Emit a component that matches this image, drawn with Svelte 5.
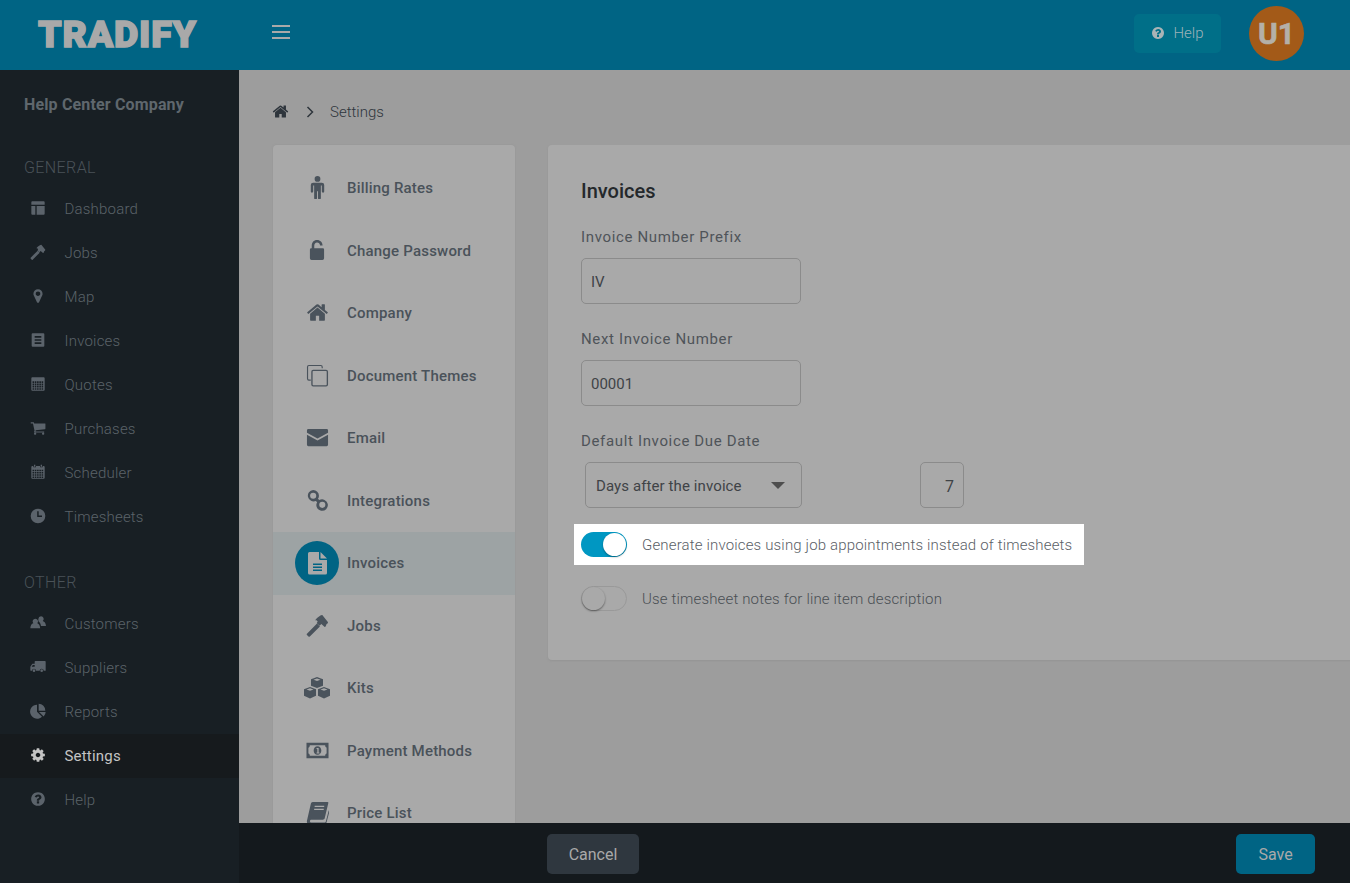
<script>
  const grid = (x0, y0, cols, rows, step, size) => {
    let d = '';
    for (let r = 0; r < rows; r++) for (let c = 0; c < cols; c++) {
      const x = x0 + c * step, y = y0 + r * step;
      d += `M${x} ${y}h${size}v${size}h-${size}z`;
    }
    return d;
  };
  const FA = '0 0 1792 1792';
  const I = {
    home: [FA, 'M1472 992v480q0 26-19 45t-45 19h-384v-384h-256v384h-384q-26 0-45-19t-19-45v-480q0-1 .5-3t.5-3l575-474 575 474q1 2 1 6zm223-69l-62 74q-8 9-21 11h-3q-13 0-21-7l-692-577-692 577q-12 8-24 7-13-2-21-11l-62-74q-8-10-7-23.500t11-21.500l719-599q32-26 76-26t76 26l244 204v-195q0-14 9-23t23-9h192q14 0 23 9t9 23v408l219 182q10 8 11 21.500t-7 23.500z'],
    help: [FA, 'M1024 1376v-192q0-14-9-23t-23-9h-192q-14 0-23 9t-9 23v192q0 14 9 23t23 9h192q14 0 23-9t9-23zm256-672q0-88-55.500-163t-138.500-116-170-41q-243 0-371 213-15 24 8 42l132 100q7 6 19 6 16 0 25-12 53-68 86-92 34-24 86-24 48 0 85.500 26t37.500 59q0 38-20 61t-68 45q-63 28-115.500 86.500t-52.500 125.500v36q0 14 9 23t23 9h192q14 0 23-9t9-23q0-19 21.500-49.500t54.500-49.500q32-18 49-28.500t46-35 44.500-48 28-60.500 12.500-81zm384 192q0 209-103 385.500t-279.500 279.500-385.500 103-385.500-103-279.500-279.500-103-385.500 103-385.500 279.500-279.500 385.500-103 385.500 103 279.500 279.500 103 385.500z'],
    marker: [FA, 'M1152 640q0-106-75-181t-181-75-181 75-75 181 75 181 181 75 181-75 75-181zm256 0q0 109-33 179l-364 774q-16 33-47.500 52t-67.500 19-67.500-19-46.500-52l-365-774q-33-70-33-179 0-212 150-362t362-150 362 150 150 362z'],
    cog: [FA, 'M1152 896q0-106-75-181t-181-75-181 75-75 181 75 181 181 75 181-75 75-181zm512-109v222q0 12-8 23t-20 13l-185 28q-19 54-39 91 35 50 107 138 10 12 10 25t-9 23q-27 37-99 108t-94 71q-12 0-26-9l-138-108q-44 23-91 38-16 136-29 186-7 28-36 28h-222q-14 0-24.500-8.500t-11.500-21.500l-28-184q-49-16-90-37l-141 107q-10 9-25 9-14 0-25-11-126-114-165-168-7-10-7-23 0-12 8-23 15-21 51-66.500t54-70.500q-27-50-41-99l-183-27q-13-2-21-12.500t-8-23.500v-222q0-12 8-23t19-13l186-28q14-46 39-92-40-57-107-138-10-12-10-24 0-10 9-23 26-36 98.500-107.500t94.500-71.500q13 0 26 10l138 107q44-23 91-38 16-136 29-186 7-28 36-28h222q14 0 24.500 8.500t11.500 21.500l28 184q49 16 90 37l142-107q9-9 24-9 13 0 25 10 129 119 165 170 7 8 7 22 0 12-8 23-15 21-51 66.500t-54 70.500q26 50 41 98l183 28q13 2 21 12.500t8 23.500z'],
    cart: [FA, 'M704 1536q0 52-38 90t-90 38-90-38-38-90 38-90 90-38 90 38 38 90zm896 0q0 52-38 90t-90 38-90-38-38-90 38-90 90-38 90 38 38 90zm128-1088v512q0 24-16.500 42.500t-40.500 21.500l-1044 122q13 60 13 70 0 16-24 64h920q26 0 45 19t19 45-19 45-45 19h-1024q-26 0-45-19t-19-45q0-11 8-31.500t16-36 21.500-40 15.500-29.500l-177-823h-204q-26 0-45-19t-19-45 19-45 45-19h256q16 0 28.500 6.500t19.500 15.500 13 24.500 8 26 5.500 29.500 4.500 26h1201q26 0 45 19t19 45z'],
    table: ['0 0 24 24', 'M2 3.500A1.500 1.500 0 0 1 3.500 2h17A1.500 1.500 0 0 1 22 3.500V7H2zM2 9h6v13H3.500A1.500 1.500 0 0 1 2 20.500zM10 9h12v11.500a1.500 1.500 0 0 1-1.500 1.500H10z'],
    hammer: ['0 0 24 24', 'M1 20.500 11.500 10l3 3L4 23.500a1 1 0 0 1-1.400 0L1 21.900a1 1 0 0 1 0-1.400zM9.500 6.500C12 3 15.500 1 17 1l6 7.500-.5 1.500-1 .5-1 2.500-1 .5-3.500-3-1.800 1.800-3-3 1-1.500c-.7-1.500-1.700-1.500-2.700-1.300z'],
    list: ['0 0 24 24', 'M4 2h16a1.500 1.500 0 0 1 1.500 1.500v17A1.500 1.500 0 0 1 20 22H4a1.500 1.500 0 0 1-1.500-1.500v-17A1.500 1.500 0 0 1 4 2zM7 6v2.500h10V6zM7 10.700v2.500h10v-2.500zM7 15.500V18h10v-2.500z'],
    calc: ['0 0 24 24', 'M3.500 2h17A1.500 1.500 0 0 1 22 3.500v17a1.500 1.500 0 0 1-1.500 1.500h-17A1.500 1.500 0 0 1 2 20.500v-17A1.500 1.500 0 0 1 3.500 2z' + grid(3.800, 8, 5, 4, 3.400, 2.400)],
    calendar: ['0 0 24 24', 'M6 1h2v3H6zM16 1h2v3h-2zM3.500 3H5v2h4V3h6v2h4V3h1.500A1.500 1.500 0 0 1 22 4.500v16a1.500 1.500 0 0 1-1.500 1.500h-17A1.500 1.500 0 0 1 2 20.500v-16A1.500 1.500 0 0 1 3.500 3z' + grid(3.800, 8.500, 5, 4, 3.400, 2.400)],
    clock: ['0 0 24 24', 'M12 1a11 11 0 1 1 0 22 11 11 0 0 1 0-22zM10.800 5v8.500H18v-2.200h-5V5z'],
    users: ['0 0 24 24', 'M16.500 2a4 4 0 0 1 2.700 7c2.700 1 4.300 3 4.800 7.500h-7.500c-.5-3.500-1.700-5.500-3.500-6.700-.3-.5-.5-1.500-.5-3.800a4.300 4.300 0 0 1 4-4zM8 5.500a4 4 0 0 1 3 6.700c2.700 1 4 3.300 4.300 7.800H.500C.7 15.500 2 13 5 12.200A4 4 0 0 1 8 5.500z'],
    truck: ['0 0 24 24', 'M8 3h14.500a1 1 0 0 1 1 1v13.500h-3a3 3 0 0 0-6 0H9a3 3 0 0 0-6 0H1a.5.5 0 0 1-.5-.5v-5.500L3.500 7H7V4a1 1 0 0 1 1-1zM2.500 11.500H7V9H4.200zM6 15.500a2 2 0 1 1 0 4 2 2 0 0 1 0-4zM17.500 15.500a2 2 0 1 1 0 4 2 2 0 0 1 0-4z'],
    pie: ['0 0 24 24', 'M10.500 2.500V13l7.500 7.500A10.500 10.500 0 1 1 10.500 2.500zM13 1a10.500 10.500 0 0 1 10 10.500H13zM13.500 13.500H23.500a10.500 10.500 0 0 1-3 6.800z'],
    male: ['0 0 24 24', 'M12 0a3 3 0 1 1 0 6 3 3 0 0 1 0-6zM7.500 7h9A2.500 2.500 0 0 1 19 9.500v6.500a1 1 0 0 1-2.500.3V10h-1v13a1 1 0 0 1-3 0v-7h-1v7a1 1 0 0 1-3 0V10h-1v6.300A1 1 0 0 1 5 16V9.500A2.500 2.500 0 0 1 7.500 7z'],
    unlock: ['0 0 24 24', 'M12 0c4 0 6.500 2.700 6.700 6.500h-3C15.500 4.300 14 3 12 3S8.700 4.500 8.700 7v3H19a1.500 1.500 0 0 1 1.500 1.500v10.500A2 2 0 0 1 18.500 24h-13a2 2 0 0 1-2-2V11.500A1.500 1.500 0 0 1 5 10h.700V7C5.700 2.700 8.200 0 12 0z'],
    copy: ['0 0 24 24', 'M3 1h12.500A2 2 0 0 1 17.500 3v1.500h-1.200V3a.8.8 0 0 0-.8-.8H3a.8.8 0 0 0-.8.8v12.500c0 .5.300.8.800.8h2v1.200H3a2 2 0 0 1-2-2V3a2 2 0 0 1 2-2zM7.500 6h13.500A2 2 0 0 1 23 8v13.500a2 2 0 0 1-2 2H7.500a2 2 0 0 1-2-2V8a2 2 0 0 1 2-2zM7.500 7.400a.6.6 0 0 0-.6.6v13.500c0 .3.300.6.600.6H21c.3 0 .6-.3.6-.6V8a.6.6 0 0 0-.6-.6z'],
    mail: ['0 0 24 24', 'M2.500 3h19A1.500 1.500 0 0 1 23 4.500V7l-11 6L1 7V4.500A1.500 1.500 0 0 1 2.500 3zM1 9.200l11 6 11-6V19.500a1.500 1.500 0 0 1-1.500 1.500h-19A1.500 1.500 0 0 1 1 19.500z'],
    link: ['0 0 24 24', 'M7.500 1a6 6 0 0 1 6 6 6 6 0 0 1-1 3.300l1.300 1.300a6 6 0 1 1-2.200 2.200l-1.300-1.300A6 6 0 1 1 7.500 1zM7.500 3.800a3.200 3.200 0 1 0 0 6.400 3.200 3.200 0 0 0 0-6.400zM17 13.300a3.200 3.200 0 1 0 0 6.400 3.200 3.200 0 0 0 0-6.400z'],
    file: ['0 0 24 24', 'M4.500 1H14v6.500a1.500 1.500 0 0 0 1.500 1.500H22v13a1.500 1.500 0 0 1-1.500 1.500h-16A1.500 1.500 0 0 1 3 22V2.500A1.500 1.500 0 0 1 4.500 1zM8 12.500V14h9v-1.500zM8 15.500V17h9v-1.500zM8 18.500V20h9v-1.500zM15.500 1l6.500 6.500h-6.500z'],
    cubes: ['0 0 28 24', 'M14 1l6 2.300v6.500L14 12 8 9.800V3.300zM10.500 3.700 14 5l3.500-1.300L14 2.600zM7 11l6 2.300v6.500l-6 2.800-6-2.800v-6.500zM3.500 13.400 7 14.800l3.500-1.400L7 12.200zM21 11l6 2.300v6.500l-6 2.800-6-2.800v-6.500zM17.500 13.400 21 14.800l3.500-1.400L21 12.200z'],
    money: ['0 0 24 24', 'M.5 4h23v16H.5zM4 6.500c0 1.500-.8 2.300-1.500 2.500v6c1 .3 1.500 1 1.500 2.500h16c0-1.500.7-2.200 1.500-2.500V9C20.700 8.700 20 8 20 6.500zM12 7.500c2.500 0 4 2 4 4.500s-1.500 4.500-4 4.500S8 14.500 8 12s1.500-4.500 4-4.500zM11 9.500v1h.8v3.500H11v1h3v-1h-.8V9.500z'],
    book: ['0 0 24 24', 'M7 1h15.500c.7 0 1 .5.800 1.200L19.500 18c-.3 1-1 1.500-2 1.500H5a1.700 1.700 0 0 0 0 3h14.500c.5 0 1-.3 1.200-1l3-11.500.8.700-3.300 12.500c-.2 1-1 1.800-2 1.800H4.500C2 25 .5 23 1 20.500L5 3c.2-1 1-2 2-2zM9 5v1.300h10V5zM8.500 8v1.300h10V8z'],
  };
  const general = [['table','Dashboard'],['hammer','Jobs'],['marker','Map'],['list','Invoices'],['calc','Quotes'],['cart','Purchases'],['calendar','Scheduler'],['clock','Timesheets']];
  const other = [['users','Customers'],['truck','Suppliers'],['pie','Reports'],['cog','Settings',true],['help','Help']];
  const settings = [['male','Billing Rates'],['unlock','Change Password'],['home','Company'],['copy','Document Themes'],['mail','Email'],['link','Integrations'],['file','Invoices',true],['hammer','Jobs'],['cubes','Kits'],['money','Payment Methods'],['book','Price List']];
</script>

{#snippet icon(name, cls)}
  <svg class={cls} viewBox={I[name][0]} aria-hidden="true"><path fill-rule="evenodd" d={I[name][1]} /></svg>
{/snippet}

{#snippet navlink(item)}
  <a class="nav-item" class:on={item[2]} href="#top">
    <span class="nav-ic">{@render icon(item[0], 'ic-' + item[0])}</span>
    <span>{item[1]}</span>
  </a>
{/snippet}

<div class="app">
  <header class="top">
    <div class="logo">TRADIFY</div>
    <button class="burger" aria-label="Menu"><i></i><i></i><i></i></button>
    <div class="top-right">
      <button class="help-btn">{@render icon('help', 'help-ic')}Help</button>
      <div class="avatar">U1</div>
    </div>
  </header>

  <aside class="side">
    <div class="company">Help Center Company</div>
    <div class="group first">GENERAL</div>
    <nav>{#each general as item}{@render navlink(item)}{/each}</nav>
    <div class="group second">OTHER</div>
    <nav>{#each other as item}{@render navlink(item)}{/each}</nav>
  </aside>

  <main class="main">
    <div class="content">
      <div class="crumbs">
        {@render icon('home', 'crumb-home')}
        <svg class="crumb-chev" viewBox="0 0 8 12" aria-hidden="true"><path d="M1.500 1l5 5-5 5" fill="none" stroke="currentColor" stroke-width="1.500" /></svg>
        <span>Settings</span>
      </div>
      <div class="panels">
        <nav class="subnav">
          {#each settings as item}
            <a class="sub-item" class:active={item[2]} href="#top">
              <span class="sub-ic">{@render icon(item[0], 'sic-' + item[0])}</span>
              <span>{item[1]}</span>
            </a>
          {/each}
        </nav>
        <section class="card">
          <h2>Invoices</h2>
          <label class="lbl" for="pre">Invoice Number Prefix</label>
          <input id="pre" class="inp" value="IV" readonly />
          <label class="lbl gap" for="nxt">Next Invoice Number</label>
          <input id="nxt" class="inp" value="00001" readonly />
          <div class="lbl gap">Default Invoice Due Date</div>
          <div class="due">
            <div class="sel"><span class="sel-text">Days after the invoice date</span><span class="caret"></span></div>
            <div class="num">7</div>
          </div>
          <div class="row hl">
            <span class="tog tog-on"><i></i></span>
            <span>Generate invoices using job appointments instead of timesheets</span>
          </div>
          <div class="row second-row">
            <span class="tog tog-off"><i></i></span>
            <span>Use timesheet notes for line item description</span>
          </div>
        </section>
      </div>
    </div>
    <footer class="foot">
      <button class="cancel">Cancel</button>
      <button class="save">Save</button>
    </footer>
  </main>
</div>

<style>
  :global(body) { margin: 0; background: #9d9d9d; font-family: Roboto, "Liberation Sans", sans-serif; }
  * { box-sizing: border-box; }
  .app { display: grid; grid-template-columns: 239px 1fr; grid-template-rows: 70px 813px; width: 1350px; height: 883px; overflow: hidden; }

  .top { grid-column: 1 / 3; background: #006484; display: flex; align-items: center; }
  .logo { width: 272px; padding-left: 38px; font: 900 37.500px/1 Roboto, sans-serif; letter-spacing: .8px; color: #a9a9a9; -webkit-text-stroke: 1.500px #a9a9a9; margin-top: -1px; }
  .burger { width: 18px; height: 14px; padding: 0; border: 0; background: none; display: flex; flex-direction: column; justify-content: space-between; margin-top: -6px; }
  .burger i { display: block; height: 2px; background: #a9a9a9; }
  .top-right { margin-left: auto; display: flex; align-items: center; padding-right: 46px; }
  .help-btn { width: 87px; height: 39px; margin-top: -4px; border: 0; border-radius: 5px; background: #006f88; color: #9db2b8; font: 300 15px Roboto, sans-serif; display: flex; align-items: center; justify-content: center; gap: 8px; }
  .help-btn :global(.help-ic) { width: 14px; height: 14px; fill: #a9b4b6; }
  .avatar { width: 55px; height: 55px; margin: -4px 0 0 28px; border-radius: 50%; background: #a35a18; color: #b4b0a8; font: 700 30px/55px Roboto, sans-serif; -webkit-text-stroke: .6px #b4b0a8; text-align: center; }

  .side { background: #181f24; color: #5b6369; }
  .company { padding: 25px 0 0 24px; font: 700 16px/20px Roboto, sans-serif; letter-spacing: .15px; color: #5f676d; }
  .group { padding-left: 24px; font: 300 16px/20px Roboto, sans-serif; letter-spacing: .4px; color: #4a5258; }
  .group.first { margin-top: 43px; margin-bottom: 9px; }
  .group.second { margin-top: 34px; margin-bottom: 9px; }
  .nav-item { display: flex; align-items: center; height: 44px; color: #5b6369; font: 300 15px/44px Roboto, sans-serif; letter-spacing: .2px; text-decoration: none; }
  .nav-item.on { background: #161a1d; color: #c4c4c4; font-weight: 400; }
  .nav-ic { width: 64.500px; display: flex; justify-content: center; padding-left: 11px; margin-top: -2px; flex: none; }
  .nav-ic :global(svg) { width: 16px; height: 16px; fill: #5b636b; flex: none; }
  .on .nav-ic :global(svg) { fill: #c4c4c4; }

  .main { position: relative; display: flex; flex-direction: column; min-width: 0; }
  .content { flex: 1; min-height: 0; overflow: hidden; padding-left: 34px; }
  .crumbs { height: 75px; padding-top: 32px; display: flex; align-items: flex-start; color: #2e353c; font: 300 15px/20px Roboto, sans-serif; }
  .crumbs :global(.crumb-home) { width: 17px; height: 17px; fill: #2e353c; margin: 1px 0 0 -1px; }
  .crumb-chev { width: 8px; height: 12px; margin: 4px 16px 0 17px; color: #2e353c; }
  .panels { display: flex; gap: 33px; align-items: flex-start; width: 1100px; }
  .subnav { width: 242px; flex: none; background: #a9a9a9; border-radius: 4px; padding-top: 12px; display: flex; flex-direction: column; box-shadow: 0 0 2px #949494; }
  .sub-item { height: 62.500px; display: flex; align-items: center; color: #4a525a; font: 500 15px Roboto, sans-serif; letter-spacing: .2px; text-decoration: none; flex: none; }
  .sub-item.active { background: #9da3a4; }
  .sub-ic { width: 74px; padding-left: 22px; padding-right: 8px; display: flex; justify-content: center; align-items: center; flex: none; margin-top: -1px; }
  .sub-ic :global(svg) { width: 23px; height: 23px; fill: #4a535c; flex: none; }
  .sub-ic :global(.sic-unlock) { width: 20px; height: 20px; }
  .sub-ic :global(.sic-cubes) { width: 28px; height: 24px; }
  .active .sub-ic { position: relative; }
  .active .sub-ic :global(svg) { width: 24px; height: 24px; fill: #a9a9a9; position: relative; }
  .active .sub-ic::before { content: ""; position: absolute; left: 22px; top: 50%; width: 44px; height: 44px; margin-top: -22px; border-radius: 50%; background: #006484; }

  .card { flex: 1; height: 515px; background: #a9a9a9; border-radius: 4px; padding: 31px 0 0 33px; box-shadow: 0 1px 2px #949494; color: #50555a; }
  h2 { margin: 0; font: 500 20px/30px Roboto, sans-serif; color: #24282b; }
  .lbl { display: block; margin-top: 20px; font: 400 15px/22px Roboto, sans-serif; letter-spacing: .65px; color: #4f5459; }
  .lbl.gap { margin-top: 24px; }
  .inp { display: block; width: 220px; height: 46px; margin-top: 10px; padding: 2px 9px 0; background: transparent; border: 1px solid #8b8b8b; border-radius: 5px; font: 400 15px Roboto, sans-serif; color: #3f4347; outline: none; }
  .due { display: flex; margin: 10px 0 0 4px; gap: 118px; }
  .sel { width: 217px; height: 46px; border: 1px solid #8b8b8b; border-radius: 5px; display: flex; align-items: center; padding: 2px 0 0 10px; font: 400 15px Roboto, sans-serif; color: #3f4347; letter-spacing: .1px; }
  .sel-text { width: 148px; overflow: hidden; white-space: nowrap; }
  .caret { width: 0; height: 0; margin: -1px 0 0 27px; border: 6px solid transparent; border-top: 7px solid #4e4e4e; border-bottom: 0; border-left-width: 7px; border-right-width: 7px; }
  .num { width: 44px; height: 46px; border: 1px solid #8b8b8b; border-radius: 5px; display: flex; align-items: center; justify-content: flex-end; padding: 2px 9px 0 0; font: 400 16px Roboto, sans-serif; color: #3f4347; }
  .row { display: flex; align-items: center; height: 41px; gap: 15px; font: 300 15px Roboto, sans-serif; letter-spacing: .16px; white-space: nowrap; }
  .hl { width: 510px; margin: 16px 0 0 -7px; padding-left: 7px; background: #fff; color: #5a6066; }
  .second-row { margin-top: 13px; color: #4a4f54; }
  .tog { position: relative; width: 46px; height: 25px; border-radius: 13px; flex: none; }
  .tog i { position: absolute; top: 1px; width: 23px; height: 23px; border-radius: 50%; }
  .tog-on { background: #0097c2; }
  .tog-on i { right: 1px; background: #fff; box-shadow: 0 1px 2px rgba(0,0,0,.35); }
  .tog-off { border: 1px solid #999; background: #a9a9a9; }
  .tog-off i { left: 0; top: 0; background: #a9a9a9; box-shadow: 0 1px 2px rgba(0,0,0,.45); }

  .foot { height: 60px; flex: none; background: #14191d; display: flex; justify-content: space-between; align-items: flex-start; padding: 11px 35px 0 308px; }
  .foot button { height: 40px; border: 0; border-radius: 5px; color: #a9a9a9; font: 400 16px Roboto, sans-serif; }
  .cancel { width: 92px; background: #2f373f; }
  .save { width: 79px; background: #006484; }
</style>
